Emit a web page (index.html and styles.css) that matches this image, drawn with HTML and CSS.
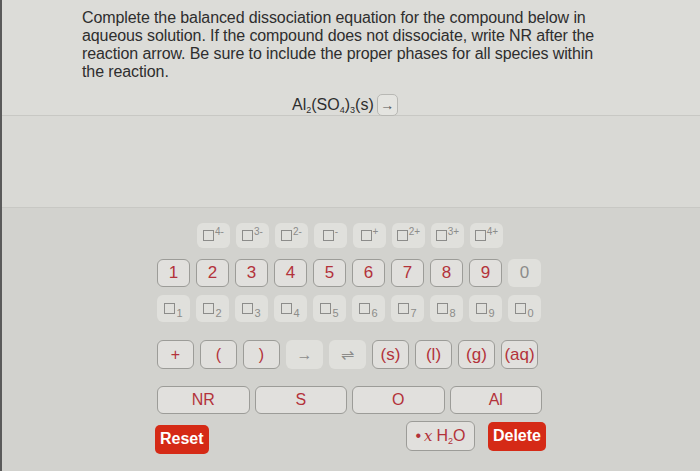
FILE: index.html
```html
<!DOCTYPE html>
<html>
<head>
<meta charset="utf-8">
<link rel="stylesheet" href="styles.css">
</head>
<body>
<div class="page">
  <section class="question">
    <p class="prompt">Complete the balanced dissociation equation for the compound below in aqueous solution. If the compound does not dissociate, write NR after the reaction arrow. Be sure to include the proper phases for all species within the reaction.</p>
    <div class="equation">Al<sub>2</sub>(SO<sub>4</sub>)<sub>3</sub>(s)<span class="answer">&rarr;</span></div>
  </section>
  <section class="gap-band"></section>
  <section class="keypad">
    <div class="row sup-row">
      <span class="key dim"><i class="box"></i><sup>4-</sup></span>
      <span class="key dim"><i class="box"></i><sup>3-</sup></span>
      <span class="key dim"><i class="box"></i><sup>2-</sup></span>
      <span class="key dim"><i class="box"></i><sup>-</sup></span>
      <span class="key dim"><i class="box"></i><sup>+</sup></span>
      <span class="key dim"><i class="box"></i><sup>2+</sup></span>
      <span class="key dim"><i class="box"></i><sup>3+</sup></span>
      <span class="key dim"><i class="box"></i><sup>4+</sup></span>
    </div>
    <div class="row digit-row">
      <span class="key">1</span><span class="key">2</span><span class="key">3</span><span class="key">4</span><span class="key">5</span><span class="key">6</span><span class="key">7</span><span class="key">8</span><span class="key">9</span><span class="key dim">0</span>
    </div>
    <div class="row sub-row">
      <span class="key dim"><i class="box"></i><sub>1</sub></span>
      <span class="key dim"><i class="box"></i><sub>2</sub></span>
      <span class="key dim"><i class="box"></i><sub>3</sub></span>
      <span class="key dim"><i class="box"></i><sub>4</sub></span>
      <span class="key dim"><i class="box"></i><sub>5</sub></span>
      <span class="key dim"><i class="box"></i><sub>6</sub></span>
      <span class="key dim"><i class="box"></i><sub>7</sub></span>
      <span class="key dim"><i class="box"></i><sub>8</sub></span>
      <span class="key dim"><i class="box"></i><sub>9</sub></span>
      <span class="key dim"><i class="box"></i><sub>0</sub></span>
    </div>
    <div class="row op-row">
      <span class="key">+</span><span class="key">(</span><span class="key">)</span><span class="key dim">&rarr;</span><span class="key dim">&#8652;</span><span class="key big">(s)</span><span class="key big">(l)</span><span class="key big">(g)</span><span class="key big">(aq)</span>
    </div>
    <div class="row el-row">
      <span class="key">NR</span><span class="key">S</span><span class="key">O</span><span class="key">Al</span>
    </div>
    <div class="row bottom-row">
      <span class="btn-red">Reset</span>
      <span class="spacer"></span>
      <span class="key water">&bull; <em>x</em> H<sub>2</sub>O</span>
      <span class="btn-red">Delete</span>
    </div>
  </section>
</div>
</body>
</html>
```
FILE: styles.css
```css
html, body {
  margin: 0;
  padding: 0;
}
body {
  width: 700px;
  height: 471px;
  overflow: hidden;
  background: #d2d2ce;
  font-family: "Liberation Sans", Arial, sans-serif;
}
.page {
  height: 471px;
  border-left: 2px solid #5a5a5a;
  box-sizing: border-box;
}
.question {
  background: #dcdcd8;
  padding: 9px 0 0 80px;
  height: 106px;
  border-bottom: 1px solid #c8c8c4;
}
.prompt {
  margin: 0;
  width: 520px;
  font-size: 16px;
  line-height: 18px;
  letter-spacing: -0.1px;
  color: #2e2e2e;
}
.equation {
  margin: 12px 0 0 210px;
  font-size: 16px;
  color: #2e2e2e;
  display: flex;
  align-items: center;
  height: 24px;
}
.equation sub {
  font-size: 9px;
  position: relative;
  top: 5px;
  vertical-align: baseline;
}
.answer {
  margin-left: 3px;
  width: 19px;
  height: 20px;
  border: 1px solid #b8b8b4;
  border-radius: 5px;
  background: #e4e4e0;
  font-size: 14px;
  color: #555;
  display: flex;
  align-items: center;
  justify-content: center;
}
.gap-band {
  height: 91px;
  background: #d9d9d5;
  border-bottom: 1px solid #c8c8c4;
}
.keypad {
  padding: 15px 0 0 155px;
  width: 385px;
}
.row {
  display: grid;
  gap: 6px;
}
.key {
  display: flex;
  align-items: center;
  justify-content: center;
  box-sizing: border-box;
  border: 1px solid #9c9c98;
  border-radius: 6px;
  background: #e1e0dd;
  color: #b3323a;
  font-size: 16px;
}
.key.dim {
  border-color: transparent;
  background: #e0e0dc;
  color: #8c8c8a;
}
.box {
  display: inline-block;
  width: 9px;
  height: 9px;
  border: 1px solid #8c8c8a;
  margin-right: 1px;
}
.key sup {
  font-size: 10px;
  position: relative;
  top: -4px;
  vertical-align: baseline;
}
.key sub {
  font-size: 11px;
  position: relative;
  top: 4px;
  vertical-align: baseline;
}
.sup-row {
  grid-template-columns: repeat(8, 33px);
  height: 25px;
  margin-left: 40px;
}
.digit-row {
  grid-template-columns: repeat(10, 33px);
  height: 28px;
  margin-top: 11px;
}
.digit-row .key {
  font-size: 17px;
}
.sub-row {
  grid-template-columns: repeat(10, 33px);
  height: 27px;
  margin-top: 8px;
}
.op-row {
  grid-template-columns: repeat(9, 37px);
  height: 29px;
  margin-top: 18px;
}
.key.big {
  font-size: 17px;
}
.el-row {
  grid-template-columns: repeat(4, 1fr);
  gap: 5px;
  height: 28px;
  margin-top: 17px;
}
.bottom-row {
  display: flex;
  align-items: center;
  height: 30px;
  margin-top: 7px;
  width: 391px;
  margin-left: -2px;
}
.spacer {
  flex: 1;
}
.btn-red {
  display: flex;
  align-items: center;
  justify-content: center;
  height: 29px;
  padding: 0 5px;
  border-radius: 5px;
  background: #d52a16;
  color: #fff;
  font-weight: bold;
  font-size: 16px;
}
.bottom-row .btn-red:first-child {
  margin-top: 6px;
}
.water {
  width: 69px;
  height: 30px;
  margin-right: 7px;
  font-size: 16px;
}
.water em {
  font-family: "DejaVu Serif", serif;
  font-style: italic;
  margin: 0 4px 0 3px;
  font-size: 15px;
}
.water sub {
  font-size: 9px;
  top: 5px;
}
```
